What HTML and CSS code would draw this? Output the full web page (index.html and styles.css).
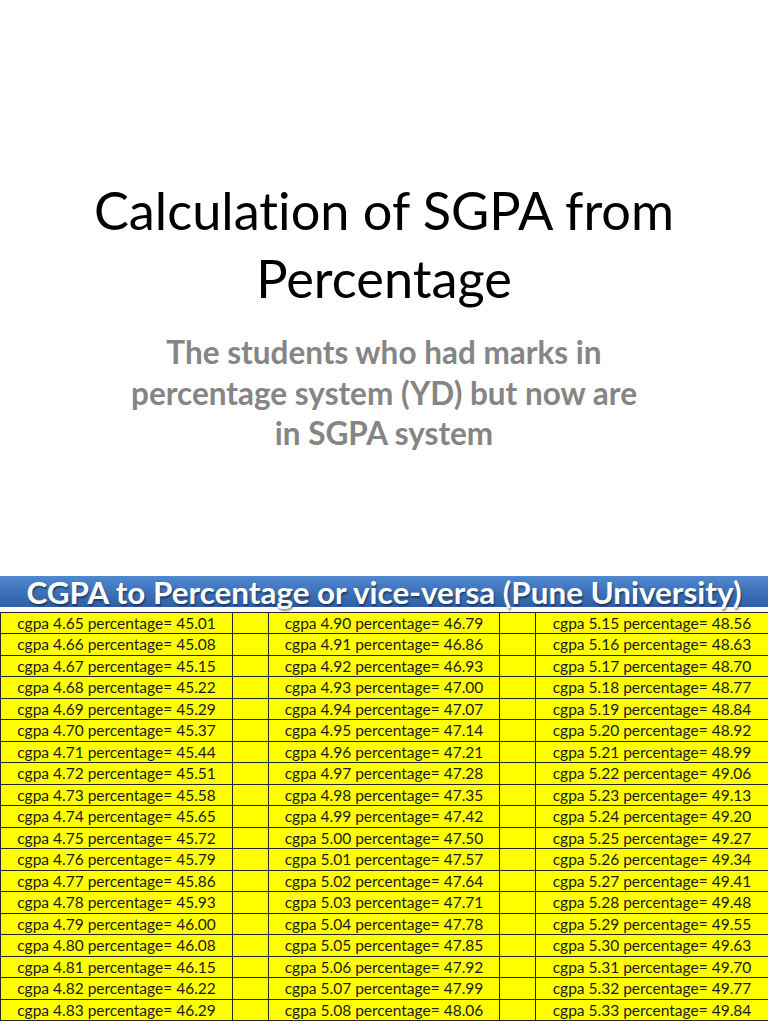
FILE: index.html
```html
<!DOCTYPE html>
<html>
<head>
<meta charset="utf-8">
<link rel="stylesheet" href="styles.css">
</head>
<body>
<section class="slide-head">
  <h1 class="title">Calculation of SGPA from<br>Percentage</h1>
  <p class="subtitle">The students who had marks in<br>percentage system (YD) but now are<br>in SGPA system</p>
</section>
<section class="sheet">
  <div class="banner">CGPA to Percentage or vice-versa (Pune University)</div>
  <table class="grid">
    <colgroup>
      <col class="c-data1"><col class="c-gap"><col class="c-data2"><col class="c-gap"><col class="c-data3">
    </colgroup>
    <tbody>
      <tr><td>cgpa 4.65 percentage= 45.01</td><td></td><td>cgpa 4.90 percentage= 46.79</td><td></td><td>cgpa 5.15 percentage= 48.56</td></tr>
      <tr><td>cgpa 4.66 percentage= 45.08</td><td></td><td>cgpa 4.91 percentage= 46.86</td><td></td><td>cgpa 5.16 percentage= 48.63</td></tr>
      <tr><td>cgpa 4.67 percentage= 45.15</td><td></td><td>cgpa 4.92 percentage= 46.93</td><td></td><td>cgpa 5.17 percentage= 48.70</td></tr>
      <tr><td>cgpa 4.68 percentage= 45.22</td><td></td><td>cgpa 4.93 percentage= 47.00</td><td></td><td>cgpa 5.18 percentage= 48.77</td></tr>
      <tr><td>cgpa 4.69 percentage= 45.29</td><td></td><td>cgpa 4.94 percentage= 47.07</td><td></td><td>cgpa 5.19 percentage= 48.84</td></tr>
      <tr><td>cgpa 4.70 percentage= 45.37</td><td></td><td>cgpa 4.95 percentage= 47.14</td><td></td><td>cgpa 5.20 percentage= 48.92</td></tr>
      <tr><td>cgpa 4.71 percentage= 45.44</td><td></td><td>cgpa 4.96 percentage= 47.21</td><td></td><td>cgpa 5.21 percentage= 48.99</td></tr>
      <tr><td>cgpa 4.72 percentage= 45.51</td><td></td><td>cgpa 4.97 percentage= 47.28</td><td></td><td>cgpa 5.22 percentage= 49.06</td></tr>
      <tr><td>cgpa 4.73 percentage= 45.58</td><td></td><td>cgpa 4.98 percentage= 47.35</td><td></td><td>cgpa 5.23 percentage= 49.13</td></tr>
      <tr><td>cgpa 4.74 percentage= 45.65</td><td></td><td>cgpa 4.99 percentage= 47.42</td><td></td><td>cgpa 5.24 percentage= 49.20</td></tr>
      <tr><td>cgpa 4.75 percentage= 45.72</td><td></td><td>cgpa 5.00 percentage= 47.50</td><td></td><td>cgpa 5.25 percentage= 49.27</td></tr>
      <tr><td>cgpa 4.76 percentage= 45.79</td><td></td><td>cgpa 5.01 percentage= 47.57</td><td></td><td>cgpa 5.26 percentage= 49.34</td></tr>
      <tr><td>cgpa 4.77 percentage= 45.86</td><td></td><td>cgpa 5.02 percentage= 47.64</td><td></td><td>cgpa 5.27 percentage= 49.41</td></tr>
      <tr><td>cgpa 4.78 percentage= 45.93</td><td></td><td>cgpa 5.03 percentage= 47.71</td><td></td><td>cgpa 5.28 percentage= 49.48</td></tr>
      <tr><td>cgpa 4.79 percentage= 46.00</td><td></td><td>cgpa 5.04 percentage= 47.78</td><td></td><td>cgpa 5.29 percentage= 49.55</td></tr>
      <tr><td>cgpa 4.80 percentage= 46.08</td><td></td><td>cgpa 5.05 percentage= 47.85</td><td></td><td>cgpa 5.30 percentage= 49.63</td></tr>
      <tr><td>cgpa 4.81 percentage= 46.15</td><td></td><td>cgpa 5.06 percentage= 47.92</td><td></td><td>cgpa 5.31 percentage= 49.70</td></tr>
      <tr><td>cgpa 4.82 percentage= 46.22</td><td></td><td>cgpa 5.07 percentage= 47.99</td><td></td><td>cgpa 5.32 percentage= 49.77</td></tr>
      <tr><td>cgpa 4.83 percentage= 46.29</td><td></td><td>cgpa 5.08 percentage= 48.06</td><td></td><td>cgpa 5.33 percentage= 49.84</td></tr>
    </tbody>
  </table>
</section>
</body>
</html>
```
FILE: styles.css
```css
html, body {
  margin: 0;
  padding: 0;
  background: #ffffff;
  width: 768px;
  height: 1024px;
  overflow: hidden;
}
body {
  font-family: Lato, "Open Sans", sans-serif;
  font-variant-ligatures: none;
  font-feature-settings: "liga" 0, "clig" 0;
  color: #000;
}
.slide-head {
  padding-top: 176px;
  text-align: center;
}
.title {
  margin: 0;
  font-family: Lato, sans-serif;
  font-weight: 400;
  font-size: 52.3px;
  line-height: 68px;
  color: #000;
}
.subtitle {
  margin: 20px 0 0;
  font-family: Lato, sans-serif;
  font-weight: 700;
  font-size: 31.5px;
  line-height: 40.5px;
  color: #858585;
}
.sheet {
  margin-top: 122px;
}
.banner {
  height: 31px;
  background: linear-gradient(to bottom, #5089cf 0%, #3e72ba 50%, #2f5fa5 100%);
  color: #fff;
  font-family: Lato, sans-serif;
  font-weight: 700;
  font-size: 31.4px;
  line-height: 32px;
  text-align: center;
  white-space: nowrap;
  text-shadow: 1px 2px 2px rgba(0,0,0,0.45);
  position: relative;
  z-index: 1;
}
.grid {
  margin-top: 5px;
  width: 768px;
  border-collapse: collapse;
  table-layout: fixed;
  background: #ffff00;
}
.c-data1 { width: 232px; }
.c-gap { width: 36px; }
.c-data2 { width: 231px; }
.c-data3 { width: 233px; }
.grid td {
  height: 20.5px;
  padding: 0;
  border: 1px solid #262626;
  font-family: Lato, sans-serif;
  font-size: 15.5px;
  line-height: 20px;
  color: #1a1a1a;
  text-align: center;
  white-space: nowrap;
}
```
